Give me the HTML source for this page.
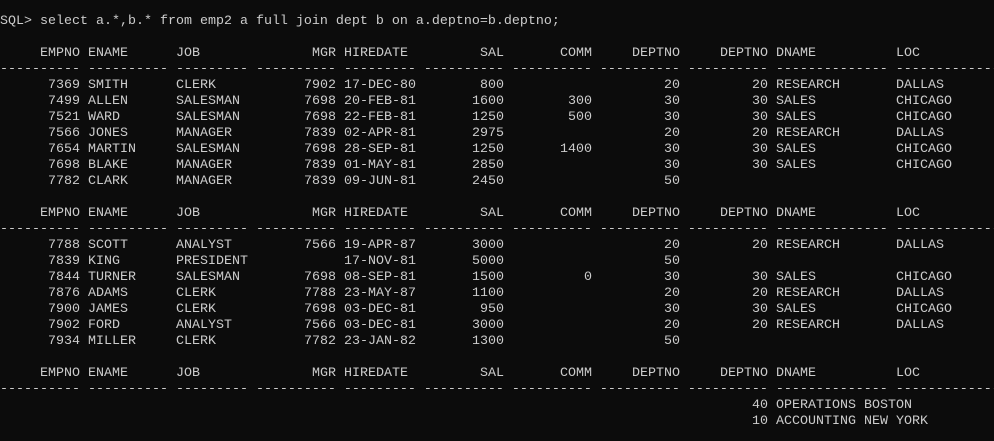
<!DOCTYPE html>
<html><head><meta charset="utf-8"><style>
html,body{margin:0;padding:0;background:#0c0c0c;width:994px;height:441px;overflow:hidden}
body{color:#cccccc;font-family:"Liberation Mono","DejaVu Sans Mono",monospace;font-size:13.33px;padding-top:14px;box-sizing:border-box}
.l{position:relative;height:16px;line-height:16px;white-space:pre}
.l span{position:absolute;top:0;white-space:pre}
.a{left:0;width:80px;text-align:right}
.b{left:88px}
.c{left:176px}
.d{left:256px;width:80px;text-align:right}
.e{left:344px}
.f{left:424px;width:80px;text-align:right}
.g{left:512px;width:80px;text-align:right}
.h{left:600px;width:80px;text-align:right}
.i{left:688px;width:80px;text-align:right}
.j{left:776px}
.k{left:896px}
.m{left:864px}
</style></head><body>
<div class="l">SQL&gt; select a.*,b.* from emp2 a full join dept b on a.deptno=b.deptno;</div>
<div class="l"></div>
<div class="l"><span class="a">EMPNO</span><span class="b">ENAME</span><span class="c">JOB</span><span class="d">MGR</span><span class="e">HIREDATE</span><span class="f">SAL</span><span class="g">COMM</span><span class="h">DEPTNO</span><span class="i">DEPTNO</span><span class="j">DNAME</span><span class="k">LOC</span></div>
<div class="l">---------- ---------- --------- ---------- --------- ---------- ---------- ---------- ---------- -------------- -------------</div>
<div class="l"><span class="a">7369</span><span class="b">SMITH</span><span class="c">CLERK</span><span class="d">7902</span><span class="e">17-DEC-80</span><span class="f">800</span><span class="h">20</span><span class="i">20</span><span class="j">RESEARCH</span><span class="k">DALLAS</span></div>
<div class="l"><span class="a">7499</span><span class="b">ALLEN</span><span class="c">SALESMAN</span><span class="d">7698</span><span class="e">20-FEB-81</span><span class="f">1600</span><span class="g">300</span><span class="h">30</span><span class="i">30</span><span class="j">SALES</span><span class="k">CHICAGO</span></div>
<div class="l"><span class="a">7521</span><span class="b">WARD</span><span class="c">SALESMAN</span><span class="d">7698</span><span class="e">22-FEB-81</span><span class="f">1250</span><span class="g">500</span><span class="h">30</span><span class="i">30</span><span class="j">SALES</span><span class="k">CHICAGO</span></div>
<div class="l"><span class="a">7566</span><span class="b">JONES</span><span class="c">MANAGER</span><span class="d">7839</span><span class="e">02-APR-81</span><span class="f">2975</span><span class="h">20</span><span class="i">20</span><span class="j">RESEARCH</span><span class="k">DALLAS</span></div>
<div class="l"><span class="a">7654</span><span class="b">MARTIN</span><span class="c">SALESMAN</span><span class="d">7698</span><span class="e">28-SEP-81</span><span class="f">1250</span><span class="g">1400</span><span class="h">30</span><span class="i">30</span><span class="j">SALES</span><span class="k">CHICAGO</span></div>
<div class="l"><span class="a">7698</span><span class="b">BLAKE</span><span class="c">MANAGER</span><span class="d">7839</span><span class="e">01-MAY-81</span><span class="f">2850</span><span class="h">30</span><span class="i">30</span><span class="j">SALES</span><span class="k">CHICAGO</span></div>
<div class="l"><span class="a">7782</span><span class="b">CLARK</span><span class="c">MANAGER</span><span class="d">7839</span><span class="e">09-JUN-81</span><span class="f">2450</span><span class="h">50</span></div>
<div class="l"></div>
<div class="l"><span class="a">EMPNO</span><span class="b">ENAME</span><span class="c">JOB</span><span class="d">MGR</span><span class="e">HIREDATE</span><span class="f">SAL</span><span class="g">COMM</span><span class="h">DEPTNO</span><span class="i">DEPTNO</span><span class="j">DNAME</span><span class="k">LOC</span></div>
<div class="l">---------- ---------- --------- ---------- --------- ---------- ---------- ---------- ---------- -------------- -------------</div>
<div class="l"><span class="a">7788</span><span class="b">SCOTT</span><span class="c">ANALYST</span><span class="d">7566</span><span class="e">19-APR-87</span><span class="f">3000</span><span class="h">20</span><span class="i">20</span><span class="j">RESEARCH</span><span class="k">DALLAS</span></div>
<div class="l"><span class="a">7839</span><span class="b">KING</span><span class="c">PRESIDENT</span><span class="e">17-NOV-81</span><span class="f">5000</span><span class="h">50</span></div>
<div class="l"><span class="a">7844</span><span class="b">TURNER</span><span class="c">SALESMAN</span><span class="d">7698</span><span class="e">08-SEP-81</span><span class="f">1500</span><span class="g">0</span><span class="h">30</span><span class="i">30</span><span class="j">SALES</span><span class="k">CHICAGO</span></div>
<div class="l"><span class="a">7876</span><span class="b">ADAMS</span><span class="c">CLERK</span><span class="d">7788</span><span class="e">23-MAY-87</span><span class="f">1100</span><span class="h">20</span><span class="i">20</span><span class="j">RESEARCH</span><span class="k">DALLAS</span></div>
<div class="l"><span class="a">7900</span><span class="b">JAMES</span><span class="c">CLERK</span><span class="d">7698</span><span class="e">03-DEC-81</span><span class="f">950</span><span class="h">30</span><span class="i">30</span><span class="j">SALES</span><span class="k">CHICAGO</span></div>
<div class="l"><span class="a">7902</span><span class="b">FORD</span><span class="c">ANALYST</span><span class="d">7566</span><span class="e">03-DEC-81</span><span class="f">3000</span><span class="h">20</span><span class="i">20</span><span class="j">RESEARCH</span><span class="k">DALLAS</span></div>
<div class="l"><span class="a">7934</span><span class="b">MILLER</span><span class="c">CLERK</span><span class="d">7782</span><span class="e">23-JAN-82</span><span class="f">1300</span><span class="h">50</span></div>
<div class="l"></div>
<div class="l"><span class="a">EMPNO</span><span class="b">ENAME</span><span class="c">JOB</span><span class="d">MGR</span><span class="e">HIREDATE</span><span class="f">SAL</span><span class="g">COMM</span><span class="h">DEPTNO</span><span class="i">DEPTNO</span><span class="j">DNAME</span><span class="k">LOC</span></div>
<div class="l">---------- ---------- --------- ---------- --------- ---------- ---------- ---------- ---------- -------------- -------------</div>
<div class="l"><span class="i">40</span><span class="j">OPERATIONS</span><span class="m">BOSTON</span></div>
<div class="l"><span class="i">10</span><span class="j">ACCOUNTING</span><span class="m">NEW YORK</span></div>
</body></html>
